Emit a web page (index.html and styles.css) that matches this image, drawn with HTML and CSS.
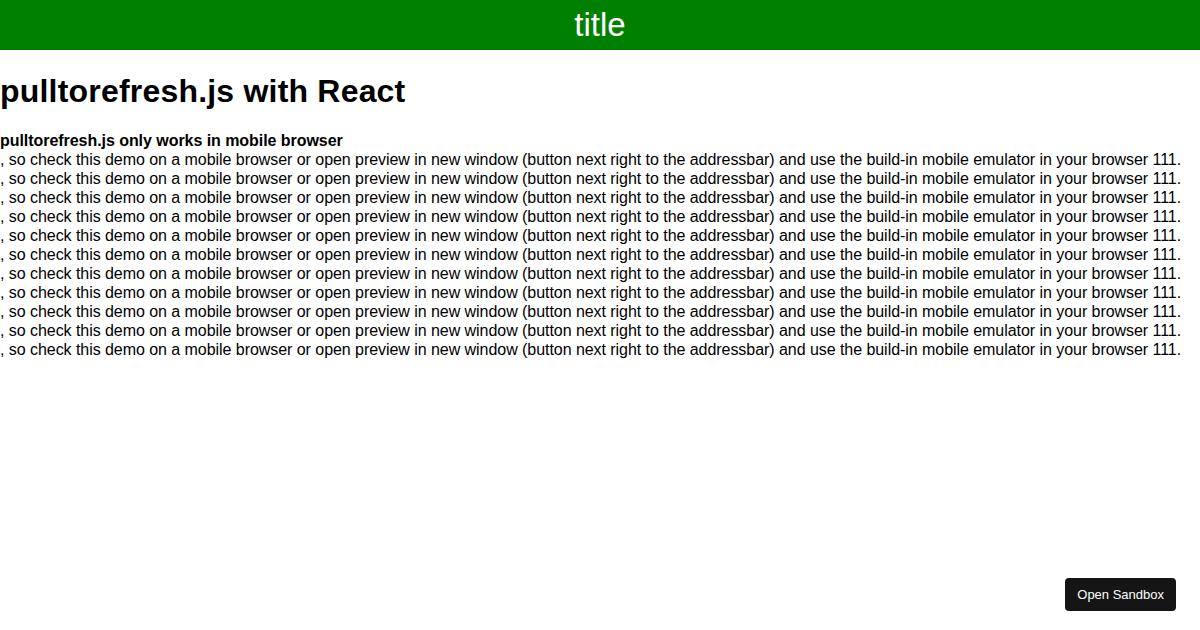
FILE: index.html
```html
<!DOCTYPE html>
<html lang="en">
<head>
<meta charset="UTF-8">
<meta name="viewport" content="width=device-width, initial-scale=1.0">
<title>pulltorefresh.js with React</title>
<link rel="stylesheet" href="styles.css">
</head>
<body>

<div class="header">title</div>

<div class="content">
  <h1>pulltorefresh.js with React</h1>
  <div class="list">
    <div class="lead">pulltorefresh.js only works in mobile browser</div>
    <div>, so check this demo on a mobile browser or open preview in new window (button next right to the addressbar) and use the build-in mobile emulator in your browser 111.</div>
    <div>, so check this demo on a mobile browser or open preview in new window (button next right to the addressbar) and use the build-in mobile emulator in your browser 111.</div>
    <div>, so check this demo on a mobile browser or open preview in new window (button next right to the addressbar) and use the build-in mobile emulator in your browser 111.</div>
    <div>, so check this demo on a mobile browser or open preview in new window (button next right to the addressbar) and use the build-in mobile emulator in your browser 111.</div>
    <div>, so check this demo on a mobile browser or open preview in new window (button next right to the addressbar) and use the build-in mobile emulator in your browser 111.</div>
    <div>, so check this demo on a mobile browser or open preview in new window (button next right to the addressbar) and use the build-in mobile emulator in your browser 111.</div>
    <div>, so check this demo on a mobile browser or open preview in new window (button next right to the addressbar) and use the build-in mobile emulator in your browser 111.</div>
    <div>, so check this demo on a mobile browser or open preview in new window (button next right to the addressbar) and use the build-in mobile emulator in your browser 111.</div>
    <div>, so check this demo on a mobile browser or open preview in new window (button next right to the addressbar) and use the build-in mobile emulator in your browser 111.</div>
    <div>, so check this demo on a mobile browser or open preview in new window (button next right to the addressbar) and use the build-in mobile emulator in your browser 111.</div>
    <div>, so check this demo on a mobile browser or open preview in new window (button next right to the addressbar) and use the build-in mobile emulator in your browser 111.</div>
  </div>
</div>

<a class="sandbox-btn">Open Sandbox</a>

</body>
</html>
```
FILE: styles.css
```css
body {
  margin: 0;
  font-family: "Liberation Sans", Arial, sans-serif;
  color: #000;
  background: #fff;
}
.header {
  background-color: #008000;
  color: #fff;
  height: 50px;
  line-height: 50px;
  text-align: center;
  font-size: 33px;
}
.content h1 {
  font-size: 32px;
  letter-spacing: 0.2px;
  margin: 23px 0 21px;
  line-height: 37px;
}
.list {
  font-size: 16px;
  line-height: 19px;
  letter-spacing: -0.05px;
  white-space: nowrap;
}
.lead {
  font-weight: bold;
}
.sandbox-btn {
  position: fixed;
  right: 24px;
  bottom: 19px;
  background-color: #151515;
  color: #fff;
  font-size: 13px;
  padding: 0 12px;
  height: 33px;
  line-height: 33px;
  border-radius: 4px;
  cursor: pointer;
}
```
